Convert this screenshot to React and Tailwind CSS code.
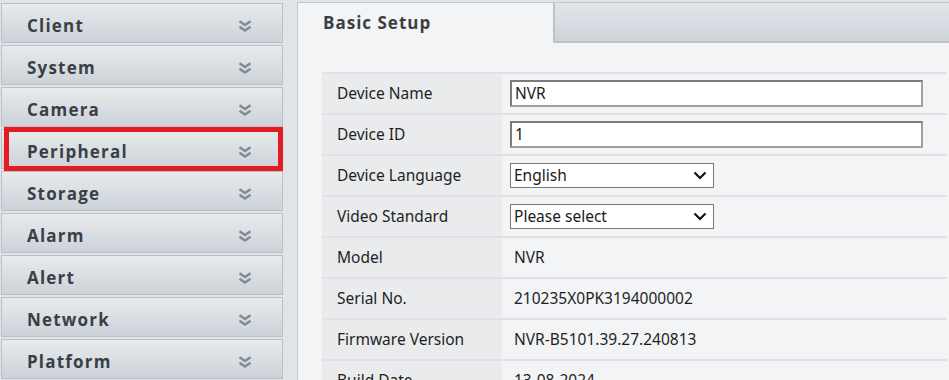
import React from "react";

const menu = ["Client", "System", "Camera", "Peripheral", "Storage", "Alarm", "Alert", "Network", "Platform"];

function DoubleChevron() {
  return (
    <svg width="14" height="12" viewBox="0 0 14 12" fill="none" stroke="#7e8a95" strokeWidth="2.3">
      <polyline points="1.5,1.2 7,5 12.5,1.2" />
      <polyline points="1.5,6.7 7,10.5 12.5,6.7" />
    </svg>
  );
}

function SelectArrow() {
  return (
    <svg width="14" height="9" viewBox="0 0 14 9" fill="none" stroke="#111" strokeWidth="2.2">
      <polyline points="1.5,1.5 7,7 12.5,1.5" />
    </svg>
  );
}

function TextInput({ value }) {
  return (
    <div className="h-[27px] w-[413px] border-2 border-t-[#7b7b7b] border-l-[#7b7b7b] border-r-[#a0a0a0] border-b-[#a0a0a0] bg-white flex items-center pl-[3px] text-[15.5px] text-[#1a1a1a]">
      {value}
    </div>
  );
}

function Select({ value }) {
  return (
    <div className="h-[25px] w-[204px] border border-[#7a7a7a] bg-white flex items-center justify-between pl-[3px] pr-[6px] text-[15.5px] text-[#1a1a1a]">
      <span>{value}</span>
      <SelectArrow />
    </div>
  );
}

const rows = [
  { label: "Device Name", field: <TextInput value="NVR" /> },
  { label: "Device ID", field: <TextInput value="1" /> },
  { label: "Device Language", field: <Select value="English" /> },
  { label: "Video Standard", field: <Select value="Please select" /> },
  { label: "Model", text: "NVR" },
  { label: "Serial No.", text: "210235X0PK3194000002" },
  { label: "Firmware Version", text: "NVR-B5101.39.27.240813" },
  { label: "Build Date", text: "13-08-2024" },
];

export default function App() {
  return (
    <div className="h-screen w-screen overflow-hidden bg-[#e1e4e7] flex">
      {/* SIDEBAR */}
      <aside className="w-[283px] shrink-0 pl-px pt-[3px] flex flex-col gap-[2px] font-['Open_Sans',sans-serif]">
        {menu.map((m) => (
          <div
            key={m}
            className="relative h-[40px] shrink-0 border border-[#b9bfc5] bg-gradient-to-b from-[#e8ebed] to-[#ccd2d8] flex items-center justify-between pt-[5px] pl-[25px] pr-[30px]"
          >
            <span className="text-[17px] font-bold tracking-[1.2px] text-[#3a3f46]">{m}</span>
            <DoubleChevron />
            {m === "Peripheral" && (
              <div className="absolute -top-[3px] -bottom-[3px] left-[2px] -right-px border-[5px] border-[#e31c24]" />
            )}
          </div>
        ))}
      </aside>

      {/* CONTENT */}
      <main className="ml-[14px] mt-[2px] flex-1 min-w-0 bg-[#f3f4f6] border-l border-t border-[#c3c8cd] flex flex-col">
        <div className="h-[40px] shrink-0 flex">
          <div className="w-[255px] flex items-center pl-[25px] font-['Open_Sans',sans-serif] text-[17px] font-bold tracking-[1px] text-[#3a3f46]">
            Basic Setup
          </div>
          <div className="flex-1 border-l-2 border-b-2 border-[#bcc2c7] bg-gradient-to-b from-[#e3e6e8] to-[#cbd3da]" />
        </div>

        <div className="mt-[29px] ml-[24px] mr-[2px] border-t-2 border-[#dfe1e4] font-['Noto_Sans',sans-serif]">
          {rows.map((r) => (
            <div key={r.label} className="h-[41px] flex border-b-2 border-[#dfe1e4]">
              <div className="w-[180px] shrink-0 bg-[#e9ebed] flex items-center pl-[15px] text-[15.5px] text-[#1f1f1f]">
                {r.label}
              </div>
              <div className="flex-1 flex items-center pl-[8px] text-[15.5px] text-[#1f1f1f]">
                {r.field ? r.field : <span className="pl-[4px]">{r.text}</span>}
              </div>
            </div>
          ))}
        </div>
      </main>
    </div>
  );
}
